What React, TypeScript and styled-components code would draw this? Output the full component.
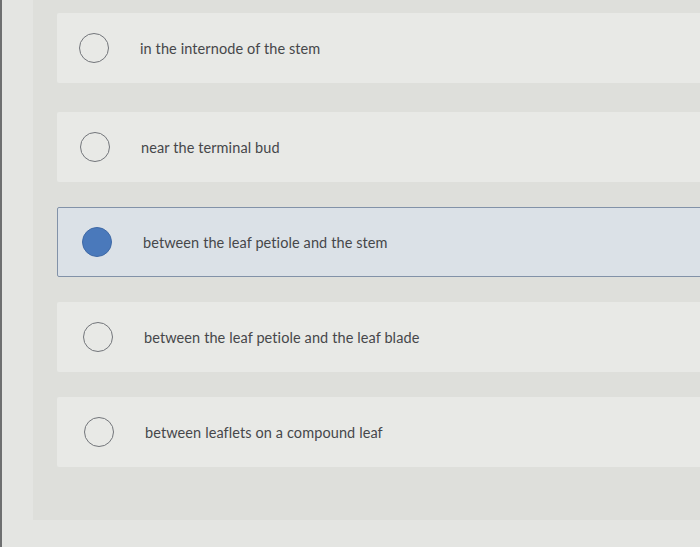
import React from 'react';
import styled, { createGlobalStyle } from 'styled-components';

const GlobalStyle = createGlobalStyle`
    html, body {
        margin: 0;
        padding: 0;
        background: #e3e4e1;
    }
    * {
        box-sizing: border-box;
    }
`;

const Screen = styled.div`
    width: 700px;
    height: 547px;
    display: flex;
    flex-direction: column;
    overflow: hidden;
    background: #e4e5e2;
    border-left: 2px solid #6e6f70;
    font-family: 'Lato', 'Open Sans', sans-serif;
`;

const Panel = styled.div`
    height: 520px;
    margin-left: 31px;
    background: #dedfdb;
    display: flex;
    flex-direction: column;
    gap: 25px;
    padding: 13px 0 0 24px;
    & > :first-child {
        margin-bottom: 4px;
    }
`;

const Choice = styled.div<{ selected: boolean; indent: number }>`
    height: 70px;
    display: flex;
    align-items: center;
    gap: 16px;
    padding-left: ${props => props.indent}px;
    margin-right: -4px;
    background: ${props => (props.selected ? '#dbe1e7' : '#e8e9e6')};
    border: ${props =>
        props.selected ? '1.5px solid #8292a8' : '1.5px solid transparent'};
    border-radius: 2px;
`;

const Radio = styled.span<{ checked: boolean }>`
    flex: none;
    width: 30px;
    height: 30px;
    border-radius: 50%;
    border: 1.5px solid ${props => (props.checked ? '#3f69a6' : '#72757a')};
    background: ${props => (props.checked ? '#4a79bb' : 'transparent')};
`;

const Label = styled.span`
    font-size: 14.5px;
    color: #46474a;
    letter-spacing: 0.1px;
    padding-left: 15px;
`;

const choices = [
    { text: 'in the internode of the stem', indent: 21 },
    { text: 'near the terminal bud', indent: 22 },
    { text: 'between the leaf petiole and the stem', indent: 24, selected: true },
    { text: 'between the leaf petiole and the leaf blade', indent: 25 },
    { text: 'between leaflets on a compound leaf', indent: 26 },
];

export default function App() {
    return (
        <>
            <GlobalStyle />
            <Screen>
                <Panel>
                    {choices.map(c => (
                        <Choice
                            key={c.text}
                            selected={!!c.selected}
                            indent={c.indent}
                        >
                            <Radio checked={!!c.selected} />
                            <Label>{c.text}</Label>
                        </Choice>
                    ))}
                </Panel>
            </Screen>
        </>
    );
}
